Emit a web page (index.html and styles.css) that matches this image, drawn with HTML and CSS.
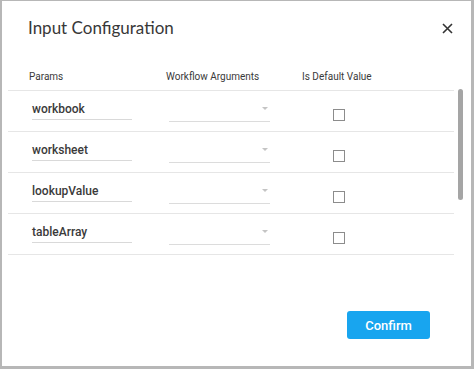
FILE: index.html
```html
<!DOCTYPE html>
<html lang="en">
  <head>
    <meta charset="UTF-8" />
    <meta name="viewport" content="width=device-width, initial-scale=1.0" />
    <title>Input Configuration</title>
    <link rel="stylesheet" href="styles.css">
  </head>
  <body>
    <section class="dialog">
      <div class="dialog__header">
        <h1>Input Configuration</h1>
        <svg class="dialog__close" width="11" height="11" viewBox="0 0 11 11">
          <path d="M1 1L10 10M10 1L1 10" stroke="#333" stroke-width="1.6" fill="none" />
        </svg>
      </div>

      <div class="config__table">
        <div class="config__row config__row--head">
          <span>Params</span>
          <span>Workflow Arguments</span>
          <span>Is Default Value</span>
        </div>

        <div class="config__row">
          <div class="config__param">workbook</div>
          <div class="config__select"><span class="config__arrow"></span></div>
          <div class="config__check"></div>
        </div>
        <div class="config__row">
          <div class="config__param">worksheet</div>
          <div class="config__select"><span class="config__arrow"></span></div>
          <div class="config__check"></div>
        </div>
        <div class="config__row">
          <div class="config__param">lookupValue</div>
          <div class="config__select"><span class="config__arrow"></span></div>
          <div class="config__check"></div>
        </div>
        <div class="config__row">
          <div class="config__param">tableArray</div>
          <div class="config__select"><span class="config__arrow"></span></div>
          <div class="config__check"></div>
        </div>

        <div class="config__scroll"></div>
      </div>

      <div class="dialog__footer">
        <button type="button">Confirm</button>
      </div>
    </section>
  </body>
</html>
```

FILE: styles.css
```css
* {
  margin: 0;
  padding: 0;
  box-sizing: border-box;
}
html {
  font-family: Roboto, "Liberation Sans", sans-serif;
}
.dialog {
  display: flex;
  flex-direction: column;
  width: 474px;
  height: 369px;
  background-color: #fff;
  border-style: solid;
  border-color: #b7b7b7;
  border-width: 1px 3px 3px 2px;
}

.dialog__header {
  display: flex;
  justify-content: space-between;
  align-items: center;
  padding: 15px 18px 0 26px;
}
.dialog__header h1 {
  font-family: Lato, "Open Sans", sans-serif;
  font-size: 17px;
  font-weight: 400;
  line-height: 24px;
  color: #383838;
}
.dialog__close {
  display: block;
}

.config__table {
  position: relative;
  margin: 22px 17px 0 6px;
}
.config__row {
  display: grid;
  grid-template-columns: 137px 136px 1fr;
  align-items: start;
  height: 41px;
  padding-left: 21px;
  border-bottom: 1px solid #e6e6e6;
}
.config__row--head {
  align-items: center;
  height: 29px;
  font-size: 10px;
  color: #3a3a3a;
}
.config__param {
  width: 100px;
  margin: 10px 0 0 3px;
  padding-bottom: 2px;
  font-size: 12px;
  font-weight: 500;
  line-height: 16px;
  color: #3a3a3a;
  border-bottom: 1px solid #d9d9d9;
}
.config__select {
  display: flex;
  justify-content: flex-end;
  align-items: center;
  width: 101px;
  height: 21px;
  margin: 10px 0 0 3px;
  padding: 0 2px 5px 0;
  border-bottom: 1px solid #dcdcdc;
}
.config__arrow {
  border-left: 3px solid transparent;
  border-right: 3px solid transparent;
  border-top: 3px solid #c4c4c4;
}
.config__check {
  width: 12px;
  height: 12px;
  margin: 18px 0 0 31px;
  border: 1px solid #8c8c8c;
}
.config__scroll {
  position: absolute;
  top: 27px;
  left: 450px;
  width: 5px;
  height: 111px;
  border-radius: 3px;
  background-color: #a5a5a5;
}

.dialog__footer {
  display: flex;
  justify-content: flex-end;
  margin-top: auto;
  padding: 0 41px 27px 0;
}
.dialog__footer button {
  width: 83px;
  height: 28px;
  border: none;
  border-radius: 3px;
  font-family: Roboto, sans-serif;
  font-size: 13px;
  font-weight: 500;
  color: #fff;
  background-color: #18a5ef;
}
```
